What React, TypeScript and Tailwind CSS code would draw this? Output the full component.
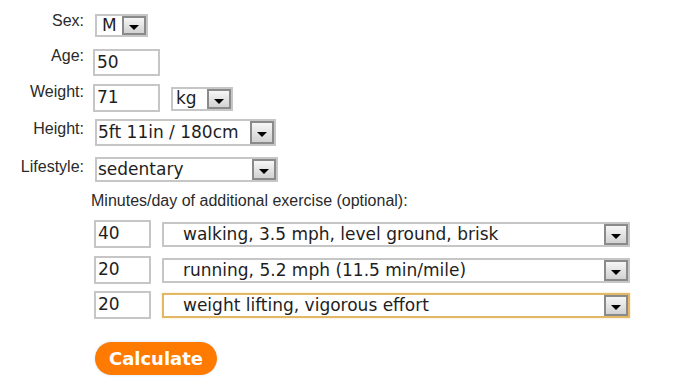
import React from "react";

const Arrow = () => (
  <svg width="10" height="5" viewBox="0 0 10 5" className="block">
    <path d="M0 0H10L5 5Z" fill="#000" />
  </svg>
);

type SelectProps = {
  value: string;
  className: string;
  textClass: string;
  focus?: boolean;
};

const Select = ({ value, className, textClass, focus }: SelectProps) => (
  <div
    className={`flex items-stretch border-2 bg-white ${
      focus ? "border-[#e2b765] shadow-[0_0_2px_#f5dcab]" : "border-[#c6c6c6]"
    } ${className}`}
  >
    <div
      className={`flex-1 flex items-center whitespace-nowrap overflow-hidden text-[17px] text-[#1e1e1e] font-['DejaVu_Sans',sans-serif] ${textClass}`}
    >
      {value}
    </div>
    <div className="w-[24px] border-2 border-[#8a8a8a] bg-gradient-to-b from-[#f6f6f6] to-[#d2d2d2] flex items-center justify-center pt-[4px]">
      <Arrow />
    </div>
  </div>
);

const Input = ({ value, className }: { value: string; className: string }) => (
  <div
    className={`flex items-center border-2 border-[#c6c6c6] bg-white pl-[2px] text-[17px] text-[#1e1e1e] font-['DejaVu_Sans',sans-serif] ${className}`}
  >
    {value}
  </div>
);

const Label = ({ text, className = "" }: { text: string; className?: string }) => (
  <div className={`w-[84px] shrink-0 text-right text-[16px] leading-[18px] text-[#2a2a2a] ${className}`}>
    {text}
  </div>
);

const exercises = [
  { min: "40", name: "walking, 3.5 mph, level ground, brisk", gap: "mt-[10px]" },
  { min: "20", name: "running, 5.2 mph (11.5 min/mile)", gap: "mt-[8px]" },
  { min: "20", name: "weight lifting, vigorous effort", gap: "mt-[7px]", focus: true },
];

export default function App() {
  return (
    <div className="w-[678px] h-[391px] bg-white pt-[12px] font-['Liberation_Sans',Arial,sans-serif]">
      <div className="flex items-start h-[25px]">
        <Label text="Sex:" />
        <Select value="M" className="ml-[11px] mt-[2px] w-[53px] h-[23px]" textClass="pl-[5px]" />
      </div>

      <div className="flex items-start mt-[10px]">
        <Label text="Age:" />
        <Input value="50" className="ml-[9px] mt-[2px] w-[67px] h-[27px]" />
      </div>

      <div className="flex items-start mt-[7px]">
        <Label text="Weight:" />
        <Input value="71" className="ml-[9px] mt-[1px] w-[67px] h-[28px]" />
        <Select value="kg" className="ml-[11px] mt-[4px] w-[62px] h-[24px]" textClass="pl-[3px]" />
      </div>

      <div className="flex items-start mt-[7px]">
        <Label text="Height:" className="mt-[1px]" />
        <Select value="5ft 11in / 180cm" className="ml-[11px] w-[181px] h-[27px]" textClass="pl-[1px]" />
      </div>

      <div className="flex items-start mt-[11px]">
        <Label text="Lifestyle:" className="mt-[1px]" />
        <Select value="sedentary" className="ml-[11px] w-[183px] h-[25px]" textClass="pl-[1px]" />
      </div>

      <div className="mt-[10px] ml-[91px] text-[16px] leading-[18px] text-[#2a2a2a]">
        Minutes/day of additional exercise (optional):
      </div>

      {exercises.map((ex, i) => (
        <div key={i} className={`flex items-start ${ex.gap}`}>
          <Input value={ex.min} className="ml-[94px] w-[57px] h-[28px]" />
          <Select
            value={ex.name}
            focus={ex.focus}
            className="ml-[11px] mt-[2px] w-[468px] h-[25px]"
            textClass="pl-[19px]"
          />
        </div>
      ))}

      <button className="mt-[23px] ml-[95px] w-[122px] h-[33px] rounded-full bg-[#ff7a00] shadow-[0_0_3px_#c9e3f3] text-white font-bold text-[18px] font-['DejaVu_Sans',sans-serif] flex items-center justify-center">
        Calculate
      </button>
    </div>
  );
}
